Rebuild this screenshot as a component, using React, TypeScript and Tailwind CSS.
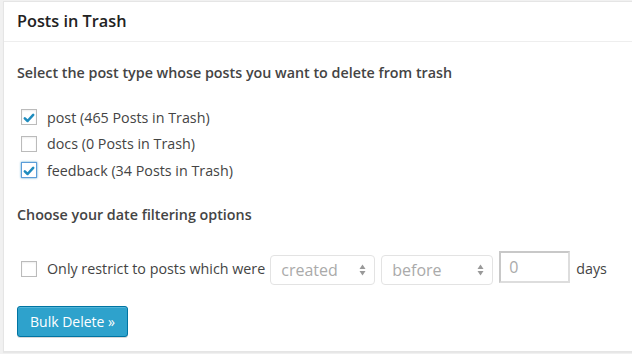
import { useState } from 'react';

const POST_TYPES = [
  { name: 'post', count: 465, checked: true },
  { name: 'docs', count: 0, checked: false },
  { name: 'feedback', count: 34, checked: true, focused: true },
];

function Check({ checked, focused }: { checked: boolean; focused?: boolean }) {
  return (
    <span
      className={`flex h-4 w-4 shrink-0 items-center justify-center border bg-white ${focused ? 'border-[#5b9dd9] shadow-[0_0_2px_rgba(30,140,190,0.8)]' : 'border-[#bbb] shadow-[inset_0_1px_2px_rgba(0,0,0,0.07)]'}`}
    >
      {checked && (
        <svg width="14" height="14" viewBox="0 0 20 20" className="mt-px">
          <path d="M4 10.5l4 3.8L16 5.5" fill="none" stroke="#1e8cbe" strokeWidth="3.6" strokeLinecap="round" strokeLinejoin="round" />
        </svg>
      )}
    </span>
  );
}

function FakeSelect({ value, width }: { value: string; width: string }) {
  return (
    <div className={`mt-[2px] flex h-[30px] ${width} items-center justify-between rounded-[4px] border border-[#e3e3e3] bg-white pl-[10px] pr-[8px] text-[16px] text-[#aaa]`}>
      <span>{value}</span>
      <svg width="7" height="12" viewBox="0 0 7 12">
        <path d="M3.5 0.5L6.5 5H0.5z" fill="#999" />
        <path d="M3.5 11.5L6.5 7H0.5z" fill="#999" />
      </svg>
    </div>
  );
}

export default function App() {
  const [types] = useState(POST_TYPES);

  return (
    <div className="h-[354px] w-[632px] overflow-hidden bg-[#f1f1f1] pl-[3px] pt-px font-['Open_Sans',sans-serif] text-[#444]">
      <div className="h-[351px] w-[640px] border border-[#e5e5e5] bg-white shadow-[0_1px_1px_rgba(0,0,0,0.04)]">
        <div className="flex h-[40px] items-center border-b border-[#eee] pl-[13px] text-[16.3px] font-semibold text-[#222]">
          Posts in Trash
        </div>

        <div className="pl-[13px] pt-[21px]">
          <div className="text-[14.3px] font-semibold leading-5">Select the post type whose posts you want to delete from trash</div>

          <div className="mt-[21px] flex flex-col pl-[4px]">
            {types.map(t => (
              <label key={t.name} className="flex h-[26.5px] items-center gap-[10px] text-[14.3px]">
                <Check checked={t.checked} focused={t.focused} />
                <span>{t.name} ({t.count} Posts in Trash)</span>
              </label>
            ))}
          </div>

          <div className="mt-[21.5px] text-[14.3px] font-semibold leading-5">Choose your date filtering options</div>

          <div className="mt-[26px] flex h-[36px] items-center pl-[4px] text-[14.3px]">
            <Check checked={false} />
            <span className="ml-[10px] mr-[5px] whitespace-nowrap">Only restrict to posts which were</span>
            <FakeSelect value="created" width="w-[105px]" />
            <div className="w-[6px] shrink-0" />
            <FakeSelect value="before" width="w-[112px]" />
            <div className="w-[6px] shrink-0" />
            <div className="mb-[4px] flex h-[32px] w-[71px] shrink-0 items-center border-2 border-[#ddd] border-l-[#c8c8c8] border-t-[#c8c8c8] bg-white pl-[8px] text-[16px] text-[#aaa]">0</div>
            <span className="ml-[6px]">days</span>
          </div>

          <div className="mt-[19px]">
            <button className="h-[31px] rounded-[3px] border border-[#0074a2] bg-[#2ea2cc] px-[12px] text-[14px] text-white shadow-[inset_0_1px_0_rgba(120,200,230,0.5),0_1px_0_rgba(0,0,0,0.15)]">
              Bulk Delete »
            </button>
          </div>
        </div>
      </div>
    </div>
  );
}
